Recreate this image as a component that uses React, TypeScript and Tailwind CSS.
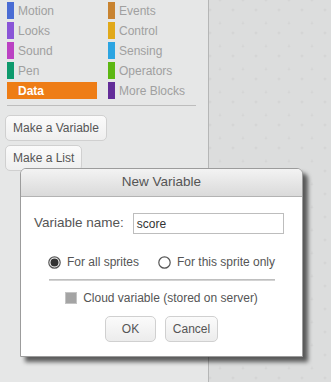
import React from 'react';

const left = [
  { name: 'Motion', color: 'bg-[#4a6cd4]' },
  { name: 'Looks', color: 'bg-[#8a55d7]' },
  { name: 'Sound', color: 'bg-[#bb42c3]' },
  { name: 'Pen', color: 'bg-[#0e9a6c]' },
];

const right = [
  { name: 'Events', color: 'bg-[#c88330]' },
  { name: 'Control', color: 'bg-[#e1a91a]' },
  { name: 'Sensing', color: 'bg-[#2ca5e2]' },
  { name: 'Operators', color: 'bg-[#5cb712]' },
  { name: 'More Blocks', color: 'bg-[#632d99]' },
];

function Category({ name, color }: { name: string; color: string }) {
  return (
    <div className="flex items-center h-[17px]">
      <div className={`w-[7px] h-full ${color}`} />
      <span className="ml-[4px] text-[12px] leading-none text-[#a0a0a0]">{name}</span>
    </div>
  );
}

function Radio({ checked }: { checked: boolean }) {
  return (
    <svg width="13" height="13" viewBox="0 0 13 13">
      <circle cx="6.5" cy="6.5" r="5.7" fill="#fff" stroke="#555" strokeWidth="1.2" />
      {checked && <circle cx="6.5" cy="6.5" r="4" fill="#333" />}
    </svg>
  );
}

export default function App() {
  return (
    <div className="relative flex w-[331px] h-[382px] overflow-hidden font-['Liberation_Sans',Arial,sans-serif]">
      {/* Palette */}
      <div className="w-[209px] h-full bg-[#e6e7e7] border-r border-[#b5b6b6] shrink-0">
        <div className="grid grid-cols-[101px_101px] pl-[7px] pt-[2px]">
          <div className="flex flex-col gap-[3px]">
            {left.map((c) => (
              <Category key={c.name} {...c} />
            ))}
            <div className="flex items-center h-[17px] w-[90px] bg-[#ee7d16]">
              <span className="pl-[11px] text-[12px] leading-none font-bold text-white">Data</span>
            </div>
          </div>
          <div className="flex flex-col gap-[3px]">
            {right.map((c) => (
              <Category key={c.name} {...c} />
            ))}
          </div>
        </div>
        <div className="ml-[7px] mt-[6px] w-[189px] h-px bg-[#bdbdbd]" />
        <div className="flex flex-col items-start pl-[5px] mt-[9px] gap-[4px]">
          <button className="h-[26px] px-[7px] rounded-[5px] border border-[#d0d0d0] bg-gradient-to-b from-[#fbfbfb] to-[#efefef] text-[12px] text-[#555]">
            Make a Variable
          </button>
          <button className="h-[26px] px-[7px] rounded-[5px] border border-[#d0d0d0] bg-gradient-to-b from-[#fbfbfb] to-[#efefef] text-[12px] text-[#555]">
            Make a List
          </button>
        </div>
      </div>

      {/* Script area */}
      <div className="flex-1 h-full bg-[#dcdddd]">
        <svg width="100%" height="100%">
          <defs>
            <pattern id="plus" x="0" y="0" width="23" height="23" patternUnits="userSpaceOnUse">
              <path d="M11 -1.5v3M9.5 0h3M1 8.5v3M-0.5 10h3" stroke="#d2d3d3" strokeWidth="1" />
              <path d="M11 21.5v3M24 8.5v3M22.5 10h3" stroke="#d2d3d3" strokeWidth="1" />
            </pattern>
          </defs>
          <rect width="100%" height="100%" fill="url(#plus)" />
        </svg>
      </div>

      {/* Dialog */}
      <div className="absolute left-[20px] top-[168px] w-[283px] rounded-t-[6px] border border-[#9c9c9c] bg-white shadow-[5px_5px_4px_rgba(0,0,0,0.6)]">
        <div className="h-[28px] flex items-center justify-center rounded-t-[5px] bg-gradient-to-b from-[#f3f3f3] to-[#dadada] border-b border-[#b3b3b3]">
          <span className="text-[13.5px] text-[#555]">New Variable</span>
        </div>
        <div className="flex flex-col items-center pt-[16px] pb-[14px]">
          <div className="flex items-center w-full pl-[13px]">
            <span className="text-[13.5px] text-[#555]">Variable name:</span>
            <div className="ml-[9px] w-[151px] h-[21px] border border-[#bdbdbd] flex items-center pl-[3px]">
              <span className="text-[12px] text-[#333]">score</span>
            </div>
          </div>
          <div className="flex items-center mt-[21px] h-[14px]">
            <Radio checked />
            <span className="ml-[6px] text-[12px] text-[#555]">For all sprites</span>
            <div className="ml-[19px]">
              <Radio checked={false} />
            </div>
            <span className="ml-[6px] text-[12px] text-[#555]">For this sprite only</span>
          </div>
          <div className="mt-[10px] w-[226px] h-[2px] bg-gradient-to-b from-[#b5b5b5] to-[#dcdcdc]" />
          <div className="flex items-center mt-[10px] h-[14px]">
            <div className="w-[12px] h-[12px] bg-[#a4a4a4] border border-[#c4c4c4]" />
            <span className="ml-[6px] text-[12px] text-[#555]">Cloud variable (stored on server)</span>
          </div>
          <div className="flex gap-[9px] mt-[11px]">
            <button className="w-[51px] h-[26px] rounded-[5px] border border-[#d0d0d0] bg-gradient-to-b from-[#fbfbfb] to-[#ececec] text-[12px] text-[#555]">
              OK
            </button>
            <button className="w-[53px] h-[26px] rounded-[5px] border border-[#d0d0d0] bg-gradient-to-b from-[#fbfbfb] to-[#ececec] text-[12px] text-[#555]">
              Cancel
            </button>
          </div>
        </div>
      </div>
    </div>
  );
}
